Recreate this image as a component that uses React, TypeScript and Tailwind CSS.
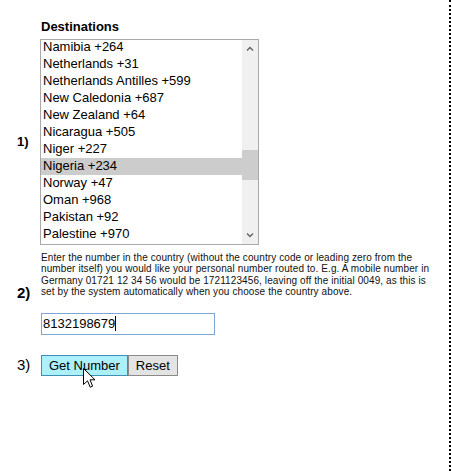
import React from "react";

const countries = [
  "Namibia +264",
  "Netherlands +31",
  "Netherlands Antilles +599",
  "New Caledonia +687",
  "New Zealand +64",
  "Nicaragua +505",
  "Niger +227",
  "Nigeria +234",
  "Norway +47",
  "Oman +968",
  "Pakistan +92",
  "Palestine +970",
];

export default function App() {
  return (
    <div
      className="relative w-[451px] h-[471px] bg-white border-r-2 border-dotted border-black text-black text-[13px]"
      style={{ fontFamily: '"Liberation Sans", Arial, sans-serif' }}
    >
      <div className="pt-[19px]">
        <div className="ml-[40px] pl-[1px] h-[16px] leading-[16px] font-bold">Destinations</div>
        {/* Row 1 */}
        <div className="mt-[4px] flex items-center">
          <div className="w-[40px] pl-[17px] font-bold text-[13px] leading-[16px]">1)</div>
          <div className="w-[219px] h-[206px] border border-[#a9a9a9] flex overflow-hidden">
            <div className="w-[201px] h-full overflow-hidden">
              <div className="-mt-[1px]">
                {countries.map((c) => (
                  <div
                    key={c}
                    className={
                      "h-[17px] leading-[15px] pl-[2px] whitespace-nowrap " +
                      (c === "Nigeria +234" ? "bg-[#cccccc]" : "")
                    }
                  >
                    {c}
                  </div>
                ))}
              </div>
            </div>
            <div className="w-[16px] h-full bg-[#f0f0f0] flex flex-col">
              <div className="h-[17px] flex items-center justify-center">
                <svg width="8" height="5" viewBox="0 0 8 5">
                  <path d="M1 4.5 L4 1.5 L7 4.5" fill="none" stroke="#606060" strokeWidth="1.3" />
                </svg>
              </div>
              <div className="h-[93px]" />
              <div className="h-[30px] bg-[#cdcdcd]" />
              <div className="flex-1" />
              <div className="h-[17px] flex items-center justify-center">
                <svg width="8" height="5" viewBox="0 0 8 5">
                  <path d="M1 0.5 L4 3.5 L7 0.5" fill="none" stroke="#606060" strokeWidth="1.3" />
                </svg>
              </div>
            </div>
          </div>
        </div>
        {/* Row 2 */}
        <div className="mt-[7px] flex items-center">
          <div className="w-[40px] pl-[17px] font-bold text-[15px] leading-[18px]">2)</div>
          <div className="pl-[1px]">
            <div className="text-[10px] leading-[11.4px] tracking-[0.1px] whitespace-nowrap text-[#111]">
              Enter the number in the country (without the country code or leading zero from the
              <br />
              number itself) you would like your personal number routed to. E.g. A mobile number in
              <br />
              Germany 01721 12 34 56 would be 1721123456, leaving off the initial 0049, as this is
              <br />
              set by the system automatically when you choose the country above.
            </div>
            <div className="mt-[15px] w-[174px] h-[22px] border border-[#7ba7d8] flex items-center pl-[1px] leading-[16px]">
              <span>8132198679</span>
              <span className="inline-block w-[1px] h-[15px] bg-black" />
            </div>
          </div>
        </div>
        {/* Row 3 */}
        <div className="mt-[20px] flex items-center">
          <div className="w-[40px] pl-[17px] text-[15px] leading-[18px]">3)</div>
          <div className="pl-[1px] flex">
            <button className="h-[21px] px-[7px] border border-[#3c8fb8] bg-[#acf0fb] leading-[17px] text-[13px]">
              Get Number
            </button>
            <button className="h-[21px] px-[7px] border border-[#8a8a8a] bg-[#e3e3e3] leading-[17px] text-[13px]">
              Reset
            </button>
          </div>
        </div>
      </div>
      {/* mouse cursor */}
      <svg
        className="absolute left-[83px] top-[368px]"
        width="13"
        height="21"
        viewBox="0 0 13 21"
      >
        <path
          d="M0.5 0.5 L0.5 16.5 L4.5 12.8 L7.2 19.2 L9.6 18.2 L7 11.8 L12 11.8 Z"
          fill="#fff"
          stroke="#000"
          strokeWidth="1"
          strokeLinejoin="miter"
        />
      </svg>
    </div>
  );
}
